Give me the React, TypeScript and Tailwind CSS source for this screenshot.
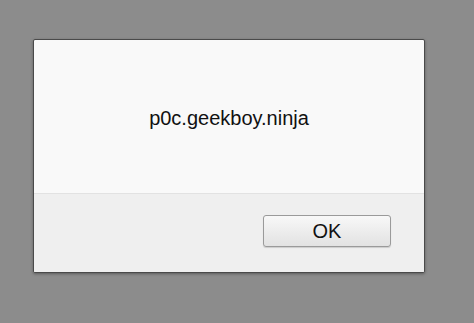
export default function App() {
  return (
    <div className="w-[474px] h-[323px] bg-[#8c8c8c] pt-[39px] pl-[33px]" style={{ fontFamily: '"Liberation Sans", Arial, sans-serif' }}>
      <div className="w-[392px] h-[234px] border border-[#4a4a4a] rounded-[2px] bg-[#f9f9f9] flex flex-col overflow-hidden shadow-[0_1px_3px_rgba(0,0,0,0.35)]">
        <div className="h-[154px] flex items-start justify-center pt-[68px] text-[20px] leading-[20px] text-[#111] border-b border-[#e2e2e2]">
          p0c.geekboy.ninja
        </div>
        <div className="flex-1 bg-[#efefef] flex justify-end items-start pt-[21px] pr-[33px]">
          <button className="w-[128px] h-[32px] rounded-[3px] border border-[#9a9a9a] bg-gradient-to-b from-[#f8f8f8] to-[#e2e2e2] text-[20px] leading-[20px] text-[#111] flex items-center justify-center shadow-[0_1px_1px_rgba(0,0,0,0.15)]">
            OK
          </button>
        </div>
      </div>
    </div>
  );
}
